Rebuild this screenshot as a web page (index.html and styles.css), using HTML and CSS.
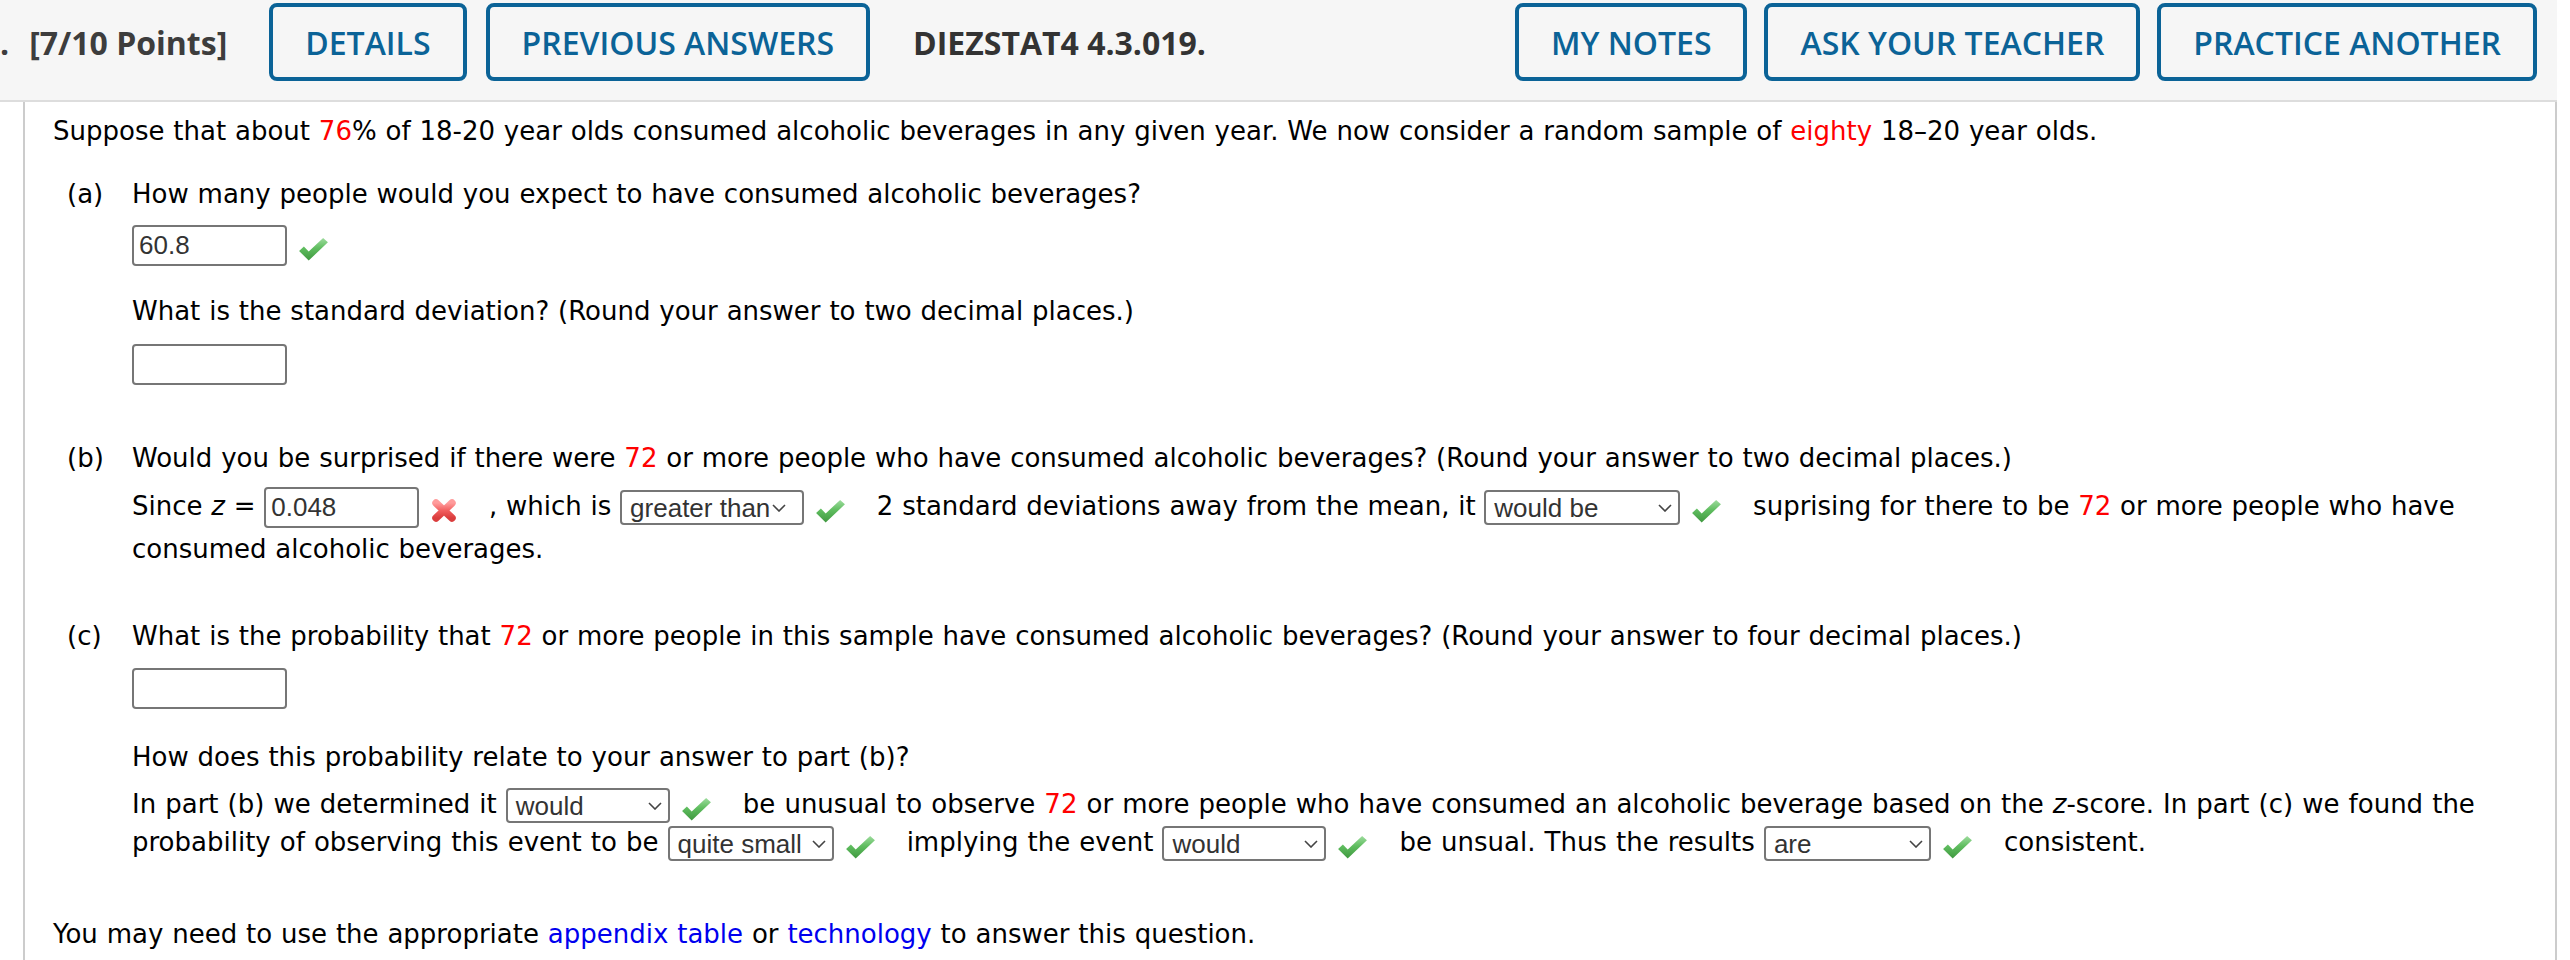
FILE: index.html
```html
<!DOCTYPE html>
<html lang="en">
<head>
<meta charset="utf-8">
<title>DIEZSTAT4 4.3.019.</title>
<link rel="stylesheet" href="styles.css">
</head>
<body>
<svg class="defs" aria-hidden="true">
  <defs>
    <linearGradient id="gOk" x1="0" y1="0" x2="0" y2="1">
      <stop offset="0" stop-color="#9edc9e"/>
      <stop offset="0.45" stop-color="#5fbd5f"/>
      <stop offset="1" stop-color="#3f983f"/>
    </linearGradient>
    <linearGradient id="gBad" x1="0" y1="0" x2="0" y2="1">
      <stop offset="0" stop-color="#ff9c9c"/>
      <stop offset="0.5" stop-color="#f25f5f"/>
      <stop offset="1" stop-color="#da3d3d"/>
    </linearGradient>
    <symbol id="iOk" viewBox="0 0 32 26">
      <path d="M1 14.5 L6 10 L11 15 L26 1 L31 5.5 L11 24.5 Z" fill="url(#gOk)"/>
    </symbol>
    <symbol id="iBad" viewBox="0 0 28 25">
      <path d="M6 5 L22 20 M22 5 L6 20" stroke="url(#gBad)" stroke-width="7.5" stroke-linecap="round" fill="none"/>
    </symbol>
    <symbol id="iChev" viewBox="0 0 14 8">
      <polyline points="1,1 7,7 13,1" fill="none" stroke="#444" stroke-width="1.6"/>
    </symbol>
  </defs>
</svg>
<div class="page">
  <header class="header">
    <span class="qdot">.</span>
    <span class="qpts">[7/10 Points]</span>
    <a class="btn btn-details">DETAILS</a>
    <a class="btn btn-prev">PREVIOUS ANSWERS</a>
    <span class="qcode">DIEZSTAT4 4.3.019.</span>
    <nav class="tools">
      <a class="btn">MY NOTES</a>
      <a class="btn">ASK YOUR TEACHER</a>
      <a class="btn">PRACTICE ANOTHER</a>
    </nav>
  </header>
  <main class="content">
    <p class="intro">Suppose that about <span class="red">76</span>% of 18-20 year olds consumed alcoholic beverages in any given year. We now consider a random sample of <span class="red">eighty</span> 18–20 year olds.</p>

    <section class="part part-a">
      <div class="plabel">(a)</div>
      <div class="pbody">
        <p class="q">How many people would you expect to have consumed alcoholic beverages?</p>
        <div class="ans-row"><input class="ans" type="text" value="60.8"><svg class="mark-row ok"><use href="#iOk"/></svg></div>
        <p class="q q-sub">What is the standard deviation? (Round your answer to two decimal places.)</p>
        <div class="ans-row ans-row-tight"><input class="ans" type="text" value=""></div>
      </div>
    </section>

    <section class="part part-b">
      <div class="plabel">(b)</div>
      <div class="pbody">
        <p class="q">Would you be surprised if there were <span class="red">72</span> or more people who have consumed alcoholic beverages? (Round your answer to two decimal places.)</p>
        <p class="fill fill-b">Since <i>z</i> = <input class="ans ans-inline" type="text" value="0.048"><svg class="mark bad"><use href="#iBad"/></svg> , which is <span class="sel sel-gt">greater than<svg class="chev"><use href="#iChev"/></svg></span><svg class="mark ok"><use href="#iOk"/></svg> 2 standard deviations away from the mean, it <span class="sel sel-wb">would be<svg class="chev"><use href="#iChev"/></svg></span><svg class="mark ok"><use href="#iOk"/></svg> suprising for there to be <span class="red">72</span> or more people who have consumed alcoholic beverages.</p>
      </div>
    </section>

    <section class="part part-c">
      <div class="plabel">(c)</div>
      <div class="pbody">
        <p class="q">What is the probability that <span class="red">72</span> or more people in this sample have consumed alcoholic beverages? (Round your answer to four decimal places.)</p>
        <div class="ans-row ans-row-c"><input class="ans" type="text" value=""></div>
        <p class="q q-how">How does this probability relate to your answer to part (b)?</p>
        <p class="fill fill-c">In part (b) we determined it <span class="sel sel-w">would<svg class="chev"><use href="#iChev"/></svg></span><svg class="mark ok"><use href="#iOk"/></svg> be unusual to observe <span class="red">72</span> or more people who have consumed an alcoholic beverage based on the <i>z</i>-score. In part (c) we found the probability of observing this event to be <span class="sel sel-qs">quite small<svg class="chev"><use href="#iChev"/></svg></span><svg class="mark ok"><use href="#iOk"/></svg> implying the event <span class="sel sel-w">would<svg class="chev"><use href="#iChev"/></svg></span><svg class="mark ok"><use href="#iOk"/></svg> be unsual. Thus the results <span class="sel sel-are">are<svg class="chev"><use href="#iChev"/></svg></span><svg class="mark ok"><use href="#iOk"/></svg> consistent.</p>
      </div>
    </section>

    <p class="note">You may need to use the appropriate <a class="link">appendix table</a> or <a class="link">technology</a> to answer this question.</p>
  </main>
</div>
</body>
</html>
```

FILE: styles.css
```css
* { box-sizing: border-box; }

html, body {
  margin: 0;
  padding: 0;
  background: #fff;
}

p { margin: 0; }

body {
  font-family: "DejaVu Sans", Verdana, sans-serif;
  font-size: 26px;
  color: #000;
}

.defs {
  display: block;
  width: 0;
  height: 0;
  overflow: hidden;
}

.page {
  width: 2557px;
}

/* ---------- header ---------- */
.header {
  display: flex;
  align-items: center;
  height: 102px;
  padding: 3px 20px 19px 0;
  background: #f6f6f6;
  border-bottom: 2px solid #dddddd;
  font-family: "Open Sans", "Liberation Sans", sans-serif;
  font-size: 32px;
  white-space: nowrap;
}

.qdot,
.qpts,
.qcode {
  font-weight: 700;
  color: #3d3d3d;
}

.qpts { margin-left: 20px; }

.btn {
  display: flex;
  align-items: center;
  height: 78px;
  padding: 0 32px;
  border: 4px solid #0b6397;
  border-radius: 8px;
  color: #0b6397;
  font-weight: 600;
  text-decoration: none;
}

.btn-details { margin-left: 42px; }
.btn-prev { margin-left: 19px; }
.qcode { margin-left: 43px; color: #333; }

.tools {
  display: flex;
  gap: 17px;
  margin-left: auto;
}

/* ---------- content ---------- */
.content {
  min-height: 858px;
  margin-left: 23px;
  padding: 14px 20px 40px 28px;
  border-left: 2px solid #cccccc;
  border-right: 2px solid #cccccc;
  line-height: 30px;
  word-spacing: 0.6px;
}

.red { color: #ff0000; }

.link {
  color: #0000ee;
  text-decoration: none;
}

.part {
  display: flex;
  padding-left: 14px;
}

.plabel {
  flex: none;
  width: 65px;
}

.pbody {
  flex: 1;
  min-width: 0;
}

.part-a { margin-top: 33px; }
.part-b { margin-top: 58px; }
.part-c { margin-top: 50px; }

.q-sub { margin-top: 30px; }
.q-how { margin-top: 33px; }

.ans-row {
  display: flex;
  align-items: flex-end;
  height: 41px;
  margin-top: 16px;
}
.ans-row-tight { margin-top: 18px; }
.ans-row-c { margin-top: 17px; }

.ans {
  width: 155px;
  height: 41px;
  padding: 0 5px;
  border: 2px solid #767676;
  border-radius: 4px;
  background: #fff;
  font-family: "Liberation Sans", Arial, sans-serif;
  font-size: 26px;
  color: #333;
  outline: none;
}

.ans-inline {
  vertical-align: middle;
}

.mark-row {
  width: 31px;
  height: 25px;
  margin: 0 0 4px 11px;
}

.mark {
  display: inline-block;
  width: 31px;
  height: 25px;
  margin: 0 22px 0 11px;
  vertical-align: -9px;
}
.mark.bad {
  width: 28px;
  vertical-align: -8px;
}

.fill-b {
  margin-top: 12px;
  line-height: 43px;
  word-spacing: 0.5px;
}

.fill-c {
  margin-top: 13px;
  line-height: 38px;
  word-spacing: 0.8px;
}

.sel {
  display: inline-flex;
  align-items: center;
  height: 35px;
  padding: 0 6px 0 8px;
  border: 2px solid #767676;
  border-radius: 4px;
  background: #fff;
  font-family: "Liberation Sans", Arial, sans-serif;
  font-size: 26px;
  line-height: 1;
  color: #333;
  vertical-align: middle;
  word-spacing: 0;
  white-space: nowrap;
}

.sel .chev {
  width: 14px;
  height: 8px;
  margin-left: auto;
  flex: none;
}

.sel-gt { width: 184px; padding-right: 16px; }
.sel-wb { width: 196px; }
.sel-w { width: 164px; }
.sel-qs { width: 166px; }
.sel-are { width: 167px; }

.note { margin-top: 58px; }
```
